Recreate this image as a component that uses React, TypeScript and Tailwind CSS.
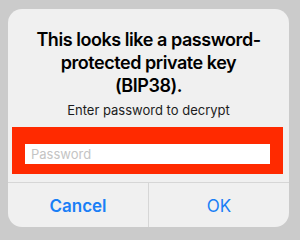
export default function App() {
  return (
    <div
      className="w-[300px] h-[240px] bg-[#cbcbcb] pt-[9px] pl-[8px]"
      style={{ fontFamily: "Inter, 'Noto Sans', sans-serif" }}
    >
      <div className="w-[281px] h-[218px] rounded-[14px] bg-[#f0f0f0] flex flex-col overflow-hidden">
        <div className="pt-[19px] px-2 text-center text-[18px] leading-[23px] font-semibold text-black tracking-[-0.45px]">
          This looks like a password-
          <br />
          protected private key
          <br />
          (BIP38).
        </div>
        <div className="mt-[5px] text-center text-[13px] leading-[17px] text-[#1c1c1c]">
          Enter password to decrypt
        </div>
        <div className="mt-[8px] ml-[4px] w-[271px] h-[47px] bg-[#ff2a00] pt-[14px] pl-[13px]">
          <input
            placeholder="Password"
            className="w-[245px] h-[20px] bg-white px-[6px] text-[13px] outline-none placeholder:text-[#c4c4c4]"
          />
        </div>
        <div className="mt-[8px] flex-1 flex border-t border-[#d6d6d6]">
          <button className="flex-1 flex items-center justify-center pt-[3px] text-[17px] font-semibold text-[#1a7ff6] border-r border-[#d6d6d6]">
            Cancel
          </button>
          <button className="flex-1 flex items-center justify-center pt-[3px] text-[17px] text-[#1a7ff6]">
            OK
          </button>
        </div>
      </div>
    </div>
  );
}
